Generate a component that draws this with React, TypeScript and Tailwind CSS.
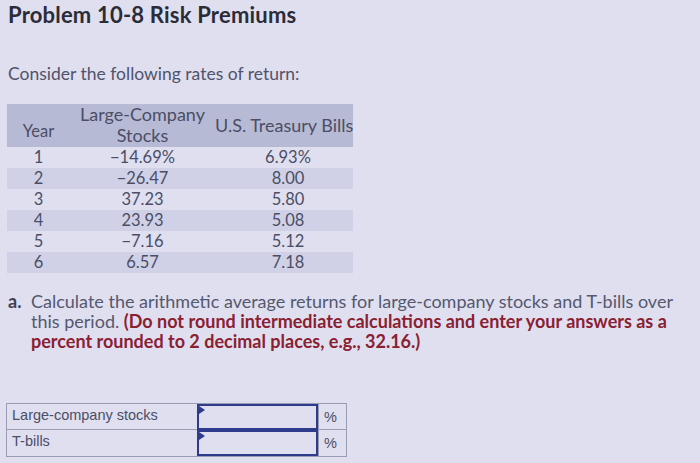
import React from 'react';

interface Row {
  year: number;
  stocks: string;
  bills: string;
}

const rows: Row[] = [
  { year: 1, stocks: '−14.69%', bills: '6.93%' },
  { year: 2, stocks: '−26.47', bills: '8.00' },
  { year: 3, stocks: '37.23', bills: '5.80' },
  { year: 4, stocks: '23.93', bills: '5.08' },
  { year: 5, stocks: '−7.16', bills: '5.12' },
  { year: 6, stocks: '6.57', bills: '7.18' },
];

const answers = ['Large-company stocks', 'T-bills'];

export default function App() {
  return (
    <div className="w-[700px] h-[463px] overflow-hidden bg-[#dfdff0] font-['Lato',_'Liberation_Sans',_sans-serif] text-[#4b4e66]">
      {/* Title */}
      <h1 className="pl-[8px] pt-[3px] text-[22px] leading-[24px] font-bold text-[#2b2c38] tracking-[0.2px]">
        Problem 10-8 Risk Premiums
      </h1>

      <p className="pl-[8px] mt-[36px] text-[17.5px] leading-[22px] text-[#50536a]">
        Consider the following rates of return:
      </p>

      {/* Rates table */}
      <div className="ml-[7px] mt-[19px] w-[346px] text-[16.5px]">
        <div className="grid grid-cols-[63px_145px_138px] h-[43px] bg-[#b7bad4] items-end">
          <div className="text-center pb-[6px] leading-[19px]">Year</div>
          <div className="text-center text-[18px] leading-[21px] pb-[1px] whitespace-nowrap">
            <div>Large-Company</div>
            <div>Stocks</div>
          </div>
          <div className="text-center text-[18px] self-center whitespace-nowrap pr-[2px]">U.S. Treasury Bills</div>
        </div>
        {rows.map((r) => (
          <div
            key={r.year}
            className={`grid grid-cols-[63px_145px_138px] h-[21px] leading-[21px] ${
              r.year % 2 === 0 ? 'bg-[#d0d1e6]' : ''
            }`}
          >
            <div className="text-center">{r.year}</div>
            <div className="text-center">{r.stocks}</div>
            <div className="text-center pl-[8px]">{r.bills}</div>
          </div>
        ))}
      </div>

      {/* Question */}
      <div className="flex mt-[18px] pl-[8px] pr-[25px] text-[18px] leading-[20px] text-[#55586e]">
        <span className="w-[23px] shrink-0 font-bold text-[#3f4256]">a.</span>
        <p>
          Calculate the arithmetic average returns for large-company stocks and T-bills over this period.{' '}
          <span className="font-bold text-[#8a2030]">
            (Do not round intermediate calculations and enter your answers as a percent rounded to 2 decimal places, e.g., 32.16.)
          </span>
        </p>
      </div>

      {/* Answer table */}
      <div className="ml-[6px] mt-[52px] w-[341px] border border-[#9a9cb4] font-['Liberation_Sans',_Arial,_sans-serif] text-[14.5px] text-[#4b4e66]">
        {answers.map((label, i) => (
          <div
            key={label}
            className={`grid grid-cols-[190px_121px_1fr] h-[26px] ${i === 0 ? 'border-b border-[#9a9cb4]' : ''}`}
          >
            <div className="pl-[5px] leading-[22px]">{label}</div>
            <div className="relative border-2 border-[#2e3a8c]">
              <div className="absolute top-0 left-0 w-0 h-0 border-t-[4px] border-b-[4px] border-l-[6px] border-t-transparent border-b-transparent border-l-[#2e3a8c]" />
            </div>
            <div className="border-l border-[#9a9cb4] pl-[5px] leading-[26px]">%</div>
          </div>
        ))}
      </div>
    </div>
  );
}
